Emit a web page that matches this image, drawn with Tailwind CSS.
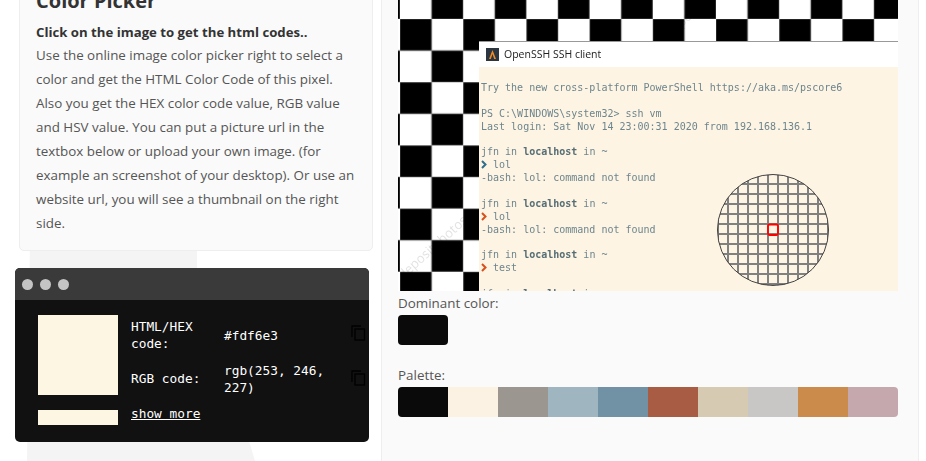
<!DOCTYPE html>
<html lang="en">
<head>
  <meta charset="UTF-8">
  <title>Color Picker</title>
  <script src="https://cdn.jsdelivr.net/npm/@tailwindcss/browser@4"></script>
</head>
<body class="relative h-[461px] overflow-hidden bg-white font-['Open_Sans',sans-serif] text-[#555]">
  <!-- grey shape behind the left column -->
  <svg class="absolute left-0 top-0" width="373" height="461"><polygon points="30,240 197,240 197,268 255,461 27,461" fill="#f4f4f4"/></svg>

  <div class="relative flex items-start">
    <!-- left column -->
    <div class="w-[354px] ml-[19px] shrink-0">
      <div class="-mt-[20px] h-[271px] rounded-b-[5px] border border-[#eeeeee] bg-[#fafafa] px-[16px] pt-[5px]">
        <h1 class="text-[20px] leading-[30px] font-bold text-[#333] mb-[4px]">Color Picker</h1>
        <p class="text-[13.2px] leading-[24px] font-bold text-[#333]">Click on the image to get the html codes..</p>
        <p class="-mt-[1px] text-[13.4px] leading-[24px]">Use the online image color picker right to select a color and get the HTML Color Code of this pixel. Also you get the HEX color code value, RGB value and HSV value. You can put a picture url in the textbox below or upload your own image. (for example an screenshot of your desktop). Or use an website url, you will see a thumbnail on the right side.</p>
      </div>

      <!-- result window -->
      <div class="-ml-[4px] mt-[17px] h-[174px] w-[354px] overflow-hidden rounded-[5px] bg-[#111] font-['DejaVu_Sans_Mono',monospace] text-[12.8px] leading-[17px] text-white">
        <div class="flex h-[32px] items-center gap-[7px] bg-[#3a3a3a] pl-[7px]">
          <span class="size-[11px] rounded-full bg-[#c4c4c4]"></span>
          <span class="size-[11px] rounded-full bg-[#c4c4c4]"></span>
          <span class="size-[11px] rounded-full bg-[#c4c4c4]"></span>
        </div>
        <div class="flex pl-[23px] pt-[15px]">
          <div class="w-[80px] shrink-0">
            <div class="h-[80px] bg-[#fdf6e3]"></div>
            <div class="mt-[15px] h-[15px] bg-[#fdf6e3]"></div>
          </div>
          <div class="ml-[13px] w-[235px]">
            <div class="flex h-[40px] items-center">
              <span class="w-[93px] shrink-0">HTML/HEX code:</span>
              <span class="flex-1">#fdf6e3</span>
              <svg class="mt-[10px] shrink-0 self-start" width="15" height="16" viewBox="0 0 15 16" fill="none" stroke="#000" stroke-width="1.3"><path d="M1 12V1h9"/><rect x="4" y="4" width="9.5" height="11"/></svg>
            </div>
            <div class="flex h-[47px] items-center">
              <span class="w-[93px] shrink-0">RGB code:</span>
              <span class="flex-1">rgb(253, 246, 227)</span>
              <svg class="mt-[15px] shrink-0 self-start" width="15" height="16" viewBox="0 0 15 16" fill="none" stroke="#000" stroke-width="1.3"><path d="M1 12V1h9"/><rect x="4" y="4" width="9.5" height="11"/></svg>
            </div>
            <a class="mt-[3px] block underline">show more</a>
          </div>
        </div>
      </div>
    </div>

    <!-- right column -->
    <div class="ml-[8px] h-[461px] w-[538px] shrink-0 border-x border-[#eeeeee] bg-[#fafafa] pl-[16px]">
      <div class="relative h-[291px] w-[500px] overflow-hidden blur-[0.3px]">
        <svg class="block" width="500" height="291">
          <defs>
            <pattern id="checks" patternUnits="userSpaceOnUse" x="2" y="19" width="63.2" height="63.2">
              <rect width="63.2" height="63.2" fill="#fff"/>
              <rect width="31.6" height="31.6" fill="#000" stroke="#777" stroke-width="0.6"/>
              <rect x="31.6" y="31.6" width="31.6" height="31.6" fill="#000" stroke="#777" stroke-width="0.6"/>
            </pattern>
          </defs>
          <rect width="500" height="291" fill="url(#checks)"/>
          <text x="5" y="280" transform="rotate(-42 5 280)" font-family="Open Sans" font-size="13" fill="#000" fill-opacity="0.12">depositphotos</text>
          <text x="272" y="38" transform="rotate(-42 272 38)" font-family="Open Sans" font-size="13" fill="#000" fill-opacity="0.12">depositphotos</text>
        </svg>

        <!-- terminal screenshot -->
        <div class="absolute left-[81px] top-[41px] h-[250px] w-[419px] overflow-hidden border-t border-[#999] bg-[#fdf4e3]">
          <div class="flex h-[25px] items-center gap-[5px] bg-white pl-[7px] font-['Open_Sans',sans-serif] text-[10.5px] text-[#222]">
            <svg width="13" height="13" viewBox="0 0 13 13"><rect width="13" height="13" fill="#2b3640"/><path d="M6.5 2 3 11h1.8L6.5 6l1.7 5H10z" fill="#f08a24"/></svg>
            OpenSSH SSH client
          </div>
          <pre class="pl-[2px] pt-[15px] font-['DejaVu_Sans_Mono',monospace] text-[10px] leading-[12.87px] text-[#6d858e]">Try the new cross-platform PowerShell https://aka.ms/pscore6

PS C:\WINDOWS\system32&gt; ssh vm
Last login: Sat Nov 14 23:00:31 2020 from 192.168.136.1

jfn in <b class="text-[#586e75]">localhost</b> in ~
<svg class="inline-block align-[-1px]" width="6" height="9" viewBox="0 0 6 9" fill="none" stroke="#2d6f8f" stroke-width="2"><path d="M1 1l3.5 3.5L1 8"/></svg> lol
-bash: lol: command not found

jfn in <b class="text-[#586e75]">localhost</b> in ~
<svg class="inline-block align-[-1px]" width="6" height="9" viewBox="0 0 6 9" fill="none" stroke="#d8501c" stroke-width="2"><path d="M1 1l3.5 3.5L1 8"/></svg> lol
-bash: lol: command not found

jfn in <b class="text-[#586e75]">localhost</b> in ~
<svg class="inline-block align-[-1px]" width="6" height="9" viewBox="0 0 6 9" fill="none" stroke="#d8501c" stroke-width="2"><path d="M1 1l3.5 3.5L1 8"/></svg> test

jfn in <b class="text-[#586e75]">localhost</b> in ~</pre>
        </div>

        <!-- magnifier -->
        <svg class="absolute left-[319px] top-[174px]" width="112" height="113" viewBox="0 0 112 113">
          <defs>
            <pattern id="loupe" patternUnits="userSpaceOnUse" x="0" y="-1" width="10" height="10">
              <rect width="2" height="10" fill="#808080"/>
              <rect width="10" height="2" fill="#808080"/>
            </pattern>
          </defs>
          <circle cx="56" cy="56" r="55.5" fill="#fdf4e3"/>
          <circle cx="56" cy="56" r="55.5" fill="url(#loupe)" stroke="#444" stroke-width="1"/>
          <rect x="51" y="50.5" width="10" height="10.5" rx="1.5" fill="none" stroke="#f00" stroke-width="1.8"/>
        </svg>
      </div>

      <p class="mt-[2px] text-[13.4px] leading-[20px]">Dominant color:</p>
      <div class="mt-[2px] h-[30px] w-[50px] rounded-[4px] bg-[#0a0a0a]"></div>
      <p class="mt-[20px] text-[13.4px] leading-[20px]">Palette:</p>
      <div class="mt-[2px] flex h-[30px] w-[500px] overflow-hidden rounded-[4px]">
        <div class="flex-1 bg-[#0a0a0a]"></div>
        <div class="flex-1 bg-[#fbf2e3]"></div>
        <div class="flex-1 bg-[#9c9691]"></div>
        <div class="flex-1 bg-[#9fb6c0]"></div>
        <div class="flex-1 bg-[#7192a4]"></div>
        <div class="flex-1 bg-[#a85c44]"></div>
        <div class="flex-1 bg-[#d7cab2]"></div>
        <div class="flex-1 bg-[#c8c7c5]"></div>
        <div class="flex-1 bg-[#cb8b4a]"></div>
        <div class="flex-1 bg-[#c5a7ae]"></div>
      </div>
    </div>
  </div>
</body>
</html>
